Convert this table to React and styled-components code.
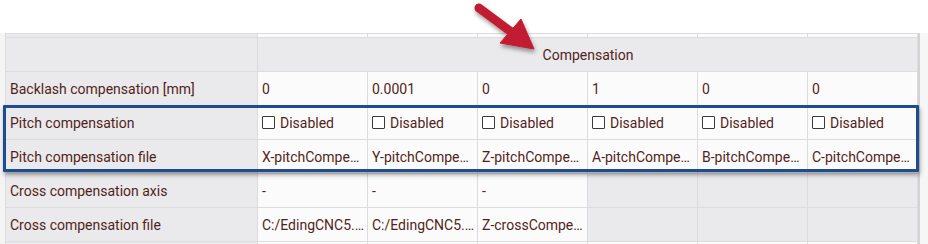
import React from 'react';
import styled, { createGlobalStyle } from 'styled-components';

const GlobalStyle = createGlobalStyle`
  html, body {
    margin: 0;
    padding: 0;
    background: #ffffff;
  }
  body {
    font-family: Roboto, "Liberation Sans", Arial, sans-serif;
    width: 928px;
    height: 244px;
    overflow: hidden;
  }
`;

const Page = styled.div`
  position: relative;
  width: 928px;
  height: 244px;
  padding-top: 33px;
  box-sizing: border-box;
`;

const Frame = styled.div`
  display: flex;
  height: 211px;
  overflow: hidden;
`;

const Gutter = styled.div`
  width: 5px;
  background: #f4f4f5;
  flex: none;
`;

const Rail = styled.div`
  width: 9px;
  flex: none;
  border-left: 2px solid #d3d3d3;
  background: #f6f6f6;
`;

const Grid = styled.table`
  border-collapse: collapse;
  table-layout: fixed;
  width: 912px;
  flex: none;
  font-size: 14px;
  color: #521f20;
`;

const Row = styled.tr`
  height: ${(p) => (p.$cut ? '4px' : '34px')};
`;

const Cell = styled.td`
  border: 1px solid #dcdbdd;
  padding: 0 2px 0 4px;
  background: ${(p) => (p.$label || p.$empty ? '#eae9eb' : '#fcfbfb')};
  vertical-align: middle;
  line-height: 16px;
  white-space: nowrap;
  overflow: hidden;
`;

const HeadCell = styled.td`
  border: 1px solid #dcdbdd;
  background: #eae9eb;
  text-align: center;
  vertical-align: middle;
  padding-left: 2px;
`;

const Check = styled.label`
  display: flex;
  align-items: center;
  gap: 5px;
`;

const Box = styled.span`
  width: 11px;
  height: 11px;
  border: 1px solid #3a3a3a;
  border-radius: 1px;
  background: #ffffff;
  flex: none;
`;

const Highlight = styled.div`
  position: absolute;
  left: 3px;
  top: 105px;
  width: 910px;
  height: 61px;
  border: 3px solid #1e4c8e;
  border-radius: 1px;
  box-shadow: 1px 3px 4px rgba(0, 0, 0, 0.35);
  pointer-events: none;
`;

const Pointer = styled.svg`
  position: absolute;
  left: 460px;
  top: 0;
  overflow: visible;
`;

// values as the grid shows them (long file names are clipped by the grid)
const axes = ['X', 'Y', 'Z', 'A', 'B', 'C'];
const backlash = ['0', '0.0001', '0', '1', '0', '0'];
const pitchFiles = axes.map((a) => `${a}-pitchCompe…`);
const crossAxis = ['-', '-', '-', null, null, null];
const crossFile = ['C:/EdingCNC5.…', 'C:/EdingCNC5.…', 'Z-crossCompe…', null, null, null];

function ValueRow({ label, values }) {
  return (
    <Row>
      <Cell $label>{label}</Cell>
      {values.map((v, i) =>
        v === null ? <Cell key={i} $empty /> : <Cell key={i}>{v}</Cell>
      )}
    </Row>
  );
}

export default function App() {
  return (
    <Page>
      <GlobalStyle />
      <Frame>
        <Gutter />
        <Grid>
          <colgroup>
            <col style={{ width: 252 }} />
            {axes.map((a) => (
              <col key={a} style={{ width: 110 }} />
            ))}
          </colgroup>
          <tbody>
            <Row $cut>
              <Cell $label />
              {axes.map((a) => (
                <Cell key={a} />
              ))}
            </Row>
            <Row>
              <HeadCell />
              <HeadCell colSpan={6}>Compensation</HeadCell>
            </Row>
            <ValueRow label="Backlash compensation [mm]" values={backlash} />
            <Row>
              <Cell $label>Pitch compensation</Cell>
              {axes.map((a) => (
                <Cell key={a}>
                  <Check>
                    <Box />
                    Disabled
                  </Check>
                </Cell>
              ))}
            </Row>
            <ValueRow label="Pitch compensation file" values={pitchFiles} />
            <ValueRow label="Cross compensation axis" values={crossAxis} />
            <ValueRow label="Cross compensation file" values={crossFile} />
            <Row>
              <Cell $label />
              {axes.map((a) => (
                <Cell key={a} />
              ))}
            </Row>
          </tbody>
        </Grid>
        <Rail />
      </Frame>
      <Highlight />
      <Pointer width="90" height="60" viewBox="0 0 90 60">
        <defs>
          <filter id="arrowShadow" x="-30%" y="-30%" width="160%" height="160%">
            <feDropShadow dx="1" dy="3" stdDeviation="2" floodColor="#000" floodOpacity="0.4" />
          </filter>
        </defs>
        <g filter="url(#arrowShadow)" fill="#c21f32" stroke="#c21f32">
          <line x1="19" y1="8" x2="54" y2="34" strokeWidth="9" strokeLinecap="round" />
          <polygon points="40,43 61,19 74,49" strokeWidth="1" strokeLinejoin="round" />
        </g>
      </Pointer>
    </Page>
  );
}
